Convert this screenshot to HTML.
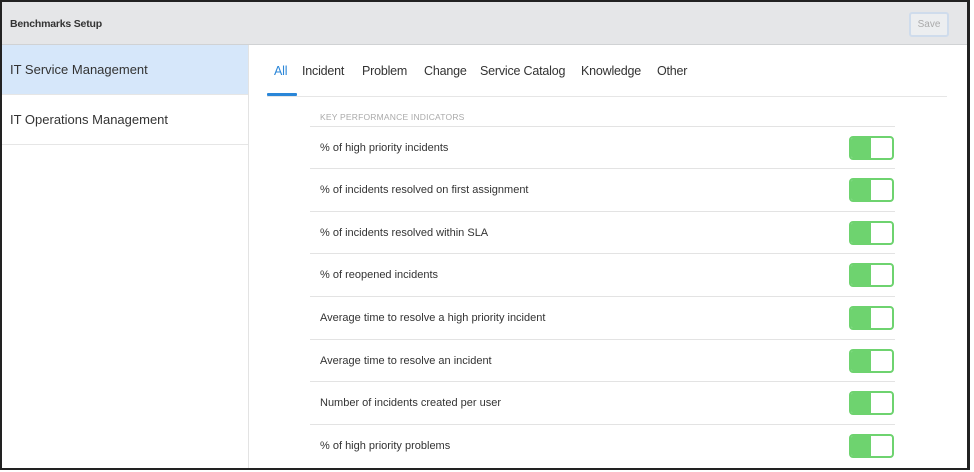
<!DOCTYPE html>
<html><head><style>
*{margin:0;padding:0;box-sizing:border-box}
body{width:974px;height:472px;background:#fff;font-family:"Liberation Sans",sans-serif;position:relative;overflow:hidden}
.frame{position:absolute;left:0;top:0;width:970px;height:470px;border:2px solid #222;border-right-width:3px;overflow:hidden}
.hdr{position:absolute;left:0;top:0;right:0;height:43px;background:#e5e6e8;border-bottom:1px solid #d0d2d4}
.hdr .t{position:absolute;left:8px;top:16px;font-size:10.5px;color:#333;font-weight:bold;letter-spacing:-.2px}
.save{position:absolute;left:907px;top:10px;width:40px;height:25px;border:2px solid #cfdcec;border-radius:3px;background:#eceef0;font-size:10px;color:#aaa;text-align:center;line-height:21px}
.left{position:absolute;left:0;top:43px;width:247px;bottom:0;border-right:1px solid #e3e3e3}
.li{height:50px;border-bottom:1px solid #e6e6e6;font-size:13px;color:#333;padding-left:8px;line-height:50px}
.li.sel{background:#d6e7fa}
.tabs{position:absolute;left:265px;top:43px;width:680px;height:52px;border-bottom:1px solid #e6e6e6}
.tab{position:absolute;top:19px;font-size:12.5px;color:#333;letter-spacing:-.2px}
.ul{position:absolute;left:0;top:48px;width:30px;height:3px;background:#2a86d8;border-radius:1px}
.kpi{position:absolute;left:318px;top:110px;font-size:8.5px;color:#aaa;letter-spacing:.2px}
.row{position:absolute;left:308px;width:585px;height:43px;border-top:1px solid #e3e3e3}
.row span{position:absolute;left:10px;top:15px;font-size:11px;color:#333}
.tg{position:absolute;left:539px;top:9px;width:45px;height:24px;border:2px solid #6ed36f;border-radius:4px;background:#fff;overflow:hidden}
.tg i{position:absolute;left:0;top:0;width:20px;height:100%;background:#6ed36f}
</style></head><body><div class="frame">
<div class="hdr"><div class="t">Benchmarks Setup</div><div class="save">Save</div></div>
<div class="left"><div class="li sel">IT Service Management</div><div class="li">IT Operations Management</div></div>
<div class="tabs">
<span class="tab" style="left:7px;color:#2a86d8">All</span>
<span class="tab" style="left:35px">Incident</span>
<span class="tab" style="left:95px">Problem</span>
<span class="tab" style="left:157px">Change</span>
<span class="tab" style="left:213px">Service Catalog</span>
<span class="tab" style="left:314px">Knowledge</span>
<span class="tab" style="left:390px">Other</span>
<div class="ul"></div></div>
<div class="kpi">KEY PERFORMANCE INDICATORS</div>
<div class="row" style="top:124px"><span>% of high priority incidents</span><div class="tg"><i></i></div></div>
<div class="row" style="top:166px"><span>% of incidents resolved on first assignment</span><div class="tg"><i></i></div></div>
<div class="row" style="top:209px"><span>% of incidents resolved within SLA</span><div class="tg"><i></i></div></div>
<div class="row" style="top:251px"><span>% of reopened incidents</span><div class="tg"><i></i></div></div>
<div class="row" style="top:294px"><span>Average time to resolve a high priority incident</span><div class="tg"><i></i></div></div>
<div class="row" style="top:337px"><span>Average time to resolve an incident</span><div class="tg"><i></i></div></div>
<div class="row" style="top:379px"><span>Number of incidents created per user</span><div class="tg"><i></i></div></div>
<div class="row" style="top:422px"><span>% of high priority problems</span><div class="tg"><i></i></div></div>
</div></body></html>
